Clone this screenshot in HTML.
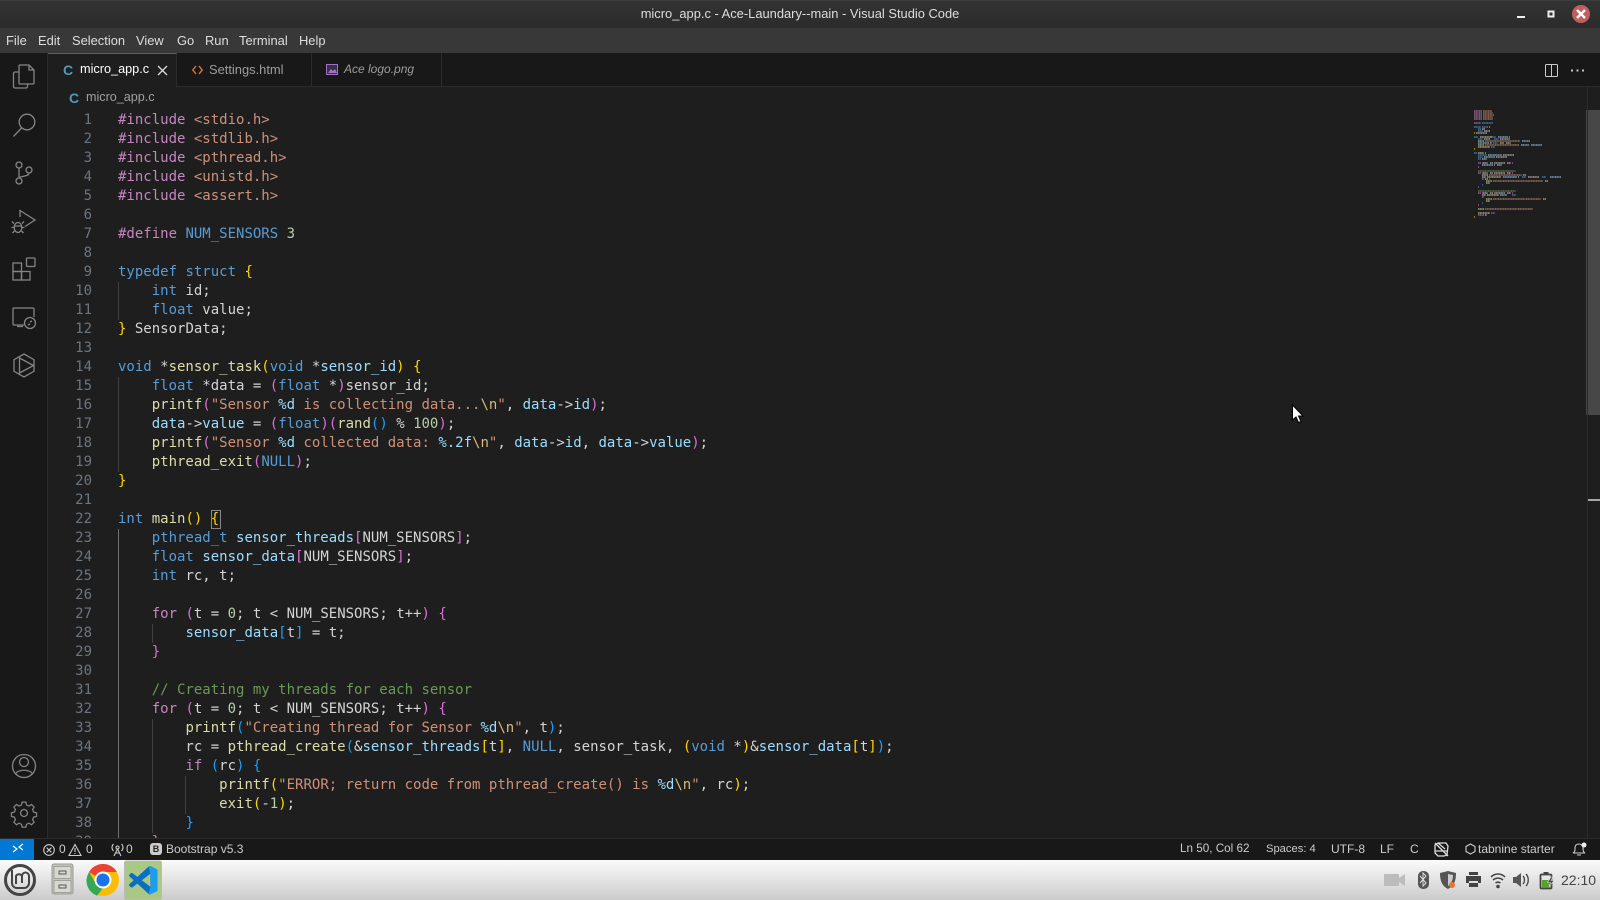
<!DOCTYPE html>
<html><head><meta charset="utf-8"><style>
html,body{margin:0;padding:0;width:1600px;height:900px;overflow:hidden;background:#1e1e1e}
body{position:relative;font-family:"Liberation Sans",sans-serif;color:#ccc}
.a{position:absolute}
.t{position:absolute;white-space:pre}
#code{position:absolute;left:0;top:111px;width:1470px;height:727px;overflow:hidden;font:14px/19px "DejaVu Sans Mono",monospace;color:#d4d4d4}
#code div{position:absolute;left:118px;white-space:pre;height:19px}
#nums{position:absolute;left:50px;top:111px;width:42px;height:727px;overflow:hidden;text-align:right;font:14px/19px "DejaVu Sans Mono",monospace;color:#6b7580}
.k{color:#c586c0}.b{color:#569cd6}.s{color:#ce9178}.f{color:#dcdcaa}.v{color:#9cdcfe}.n{color:#b5cea8}.c{color:#6a9955}.g{color:#ffd700}.o{color:#da70d6}.l{color:#179fff}.e{color:#d7ba7d}
.m{position:absolute;top:33px;font-size:12.9px;line-height:15px;color:#ddd;white-space:pre}
.st{position:absolute;top:842px;font-size:12px;line-height:14px;color:#ccc;white-space:pre}
svg{position:absolute;overflow:visible}
</style></head><body>
<div class="a" style="left:0;top:0;width:1600px;height:28px;background:linear-gradient(#333,#2b2b2b);border-top:1px solid #3c3c3c;box-sizing:border-box"></div>
<div class="t" style="left:0;width:1600px;text-align:center;top:6px;font-size:12.9px;line-height:15px;color:#ddd">micro_app.c - Ace-Laundary--main - Visual Studio Code</div>
<svg style="left:0;top:0" width="1600" height="28">
<rect x="1517" y="16" width="8" height="2" fill="#eee"/>
<rect x="1548.500" y="11.500" width="5" height="5" fill="none" stroke="#eee" stroke-width="2"/>
<circle cx="1581" cy="14" r="9" fill="#c15f5f"/>
<path d="M1577 10l8 8M1585 10l-8 8" stroke="#fff" stroke-width="2.400"/>
</svg>
<div class="a" style="left:0;top:28px;width:1600px;height:25px;background:#383838"></div>
<span class="m" style="left:6px">File</span><span class="m" style="left:38px">Edit</span><span class="m" style="left:72px">Selection</span><span class="m" style="left:136px">View</span><span class="m" style="left:177px">Go</span><span class="m" style="left:205px">Run</span><span class="m" style="left:239px">Terminal</span><span class="m" style="left:299px">Help</span>

<div class="a" style="left:0;top:53px;width:47px;height:785px;background:#181818;border-right:1px solid #2b2b2b"></div>
<div class="a" style="left:48px;top:53px;width:1552px;height:34px;background:#181818;border-bottom:1px solid #2b2b2b;box-sizing:border-box"></div>
<div class="a" style="left:48px;top:53px;width:129px;height:35px;background:#1e1e1e;border-top:1px solid #0078d4;border-right:1px solid #2b2b2b;box-sizing:border-box"></div>
<div class="a" style="left:311px;top:53px;width:1px;height:34px;background:#2b2b2b"></div>
<div class="a" style="left:441px;top:53px;width:1px;height:34px;background:#2b2b2b"></div>
<span class="t" style="left:63px;top:62px;font:bold 14px/16px 'Liberation Sans',sans-serif;color:#519aba">C</span>
<span class="t" style="left:80px;top:62px;font-size:12.700px;line-height:15px;color:#fff">micro_app.c</span>
<svg style="left:157px;top:65px" width="12" height="12"><path d="M1 1l9 9M10 1l-9 9" stroke="#ddd" stroke-width="1.300" fill="none"/></svg>
<svg style="left:192px;top:65px" width="11" height="10" fill="none" stroke="#e37933" stroke-width="1.400"><path d="M4 1L.8 5 4 9M7 1l3.200 4L7 9"/></svg>
<span class="t" style="left:209px;top:62px;font-size:12.900px;line-height:15px;color:#9d9d9d">Settings.html</span>
<svg style="left:326px;top:64px" width="13" height="12"><rect x=".5" y=".5" width="11" height="10" fill="#3a2f4a" stroke="#a074c4"/><path d="M2 9l3-4 2 2 2-2 2 4z" fill="#a074c4"/></svg>
<span class="t" style="left:344px;top:62px;font-size:12px;line-height:15px;color:#9d9d9d;font-style:italic">Ace logo.png</span>
<svg style="left:1545px;top:64px" width="13" height="13"><rect x=".5" y=".5" width="12" height="12" rx="1" fill="none" stroke="#ccc"/><path d="M6.500 0v13" stroke="#ccc"/></svg>
<svg style="left:1571px;top:69px" width="14" height="3"><path d="M0 1.500h2M5.500 1.500h2M11 1.500h2" stroke="#c5c5c5" stroke-width="2"/></svg>

<span class="t" style="left:69px;top:90px;font:bold 14px/16px 'Liberation Sans',sans-serif;color:#519aba">C</span>
<span class="t" style="left:86px;top:90px;font-size:12.600px;line-height:15px;color:#a0a0a0">micro_app.c</span>

<svg style="left:0;top:53px" width="47" height="785" fill="none" stroke="#858585" stroke-width="1.300">
<g transform="translate(0,-53)">
<path d="M20 65h9l5 5v13a1 1 0 0 1-1 1H20a1 1 0 0 1-1-1V66a1 1 0 0 1 1-1zM29 65v5h5M19 72h-4a1.500 1.500 0 0 0-1.500 1.500v13a1.500 1.500 0 0 0 1.500 1.500h11a1.500 1.500 0 0 0 1.500-1.500V84"/>
<circle cx="27" cy="122" r="7.800"/><path d="M21.500 128L13.500 136.500"/>
<circle cx="19" cy="165" r="3"/><circle cx="19" cy="181" r="3"/><circle cx="29" cy="170" r="3"/><path d="M19 168v10M29 173c0 4-10 3-10 5"/>
<path d="M20 217v-6.500l15 9.500-10 6.500"/><ellipse cx="18" cy="227.500" rx="3.800" ry="5"/><path d="M14 223.500l-2-2M22 223.500l2-2M14 227.500h-2.500M22 227.500h2.500M14.500 231l-2 2M21.500 231l2 2M14 226h8"/>
<rect x="13" y="263" width="8.500" height="8.500"/><rect x="13" y="271.500" width="8.500" height="8.500"/><rect x="21.500" y="271.500" width="8.500" height="8.500"/><rect x="26.500" y="258" width="8.500" height="8.500" rx="1"/>
<path d="M24 325H14a1 1 0 0 1-1-1V309a1 1 0 0 1 1-1h19a1 1 0 0 1 1 1v8M17 326.500h6"/><circle cx="30" cy="323" r="5.500"/><path d="M28 325l2-1M30 322l2-1"/>
<path d="M24 354l10 5.700v11.600l-10 5.700-10-5.700V359.700z"/><path d="M19.500 358v15l14-7.500z"/>
<circle cx="24" cy="766" r="11.500"/><circle cx="24" cy="762" r="4.500"/><path d="M15.500 774c2-5 15-5 17 0"/>
<circle cx="24" cy="813" r="3.500"/><path d="M22 802h4l.6 3 2.700 1.200 2.600-1.700 2.800 2.800-1.700 2.600 1.200 2.700 3 .6v4l-3 .6-1.200 2.700 1.700 2.600-2.800 2.800-2.600-1.700-2.700 1.200-.6 3h-4l-.6-3-2.700-1.200-2.600 1.700-2.800-2.800 1.700-2.600-1.200-2.700-3-.6v-4l3-.6 1.200-2.700-1.700-2.600 2.800-2.800 2.600 1.700 2.700-1.200z" transform="translate(24 813) scale(.95) translate(-24 -813.500)"/>
</g></svg>

<div id="nums">
<div>1</div><div>2</div><div>3</div><div>4</div><div>5</div><div>6</div><div>7</div><div>8</div><div>9</div><div>10</div><div>11</div><div>12</div><div>13</div><div>14</div><div>15</div><div>16</div><div>17</div><div>18</div><div>19</div><div>20</div><div>21</div><div>22</div><div>23</div><div>24</div><div>25</div><div>26</div><div>27</div><div>28</div><div>29</div><div>30</div><div>31</div><div>32</div><div>33</div><div>34</div><div>35</div><div>36</div><div>37</div><div>38</div><div>39</div>
</div>

<div id="code">
<i class="a" style="left:118px;top:171px;width:1px;height:38px;background:#404040"></i>
<i class="a" style="left:118px;top:266px;width:1px;height:95px;background:#404040"></i>
<i class="a" style="left:118px;top:418px;width:1px;height:310px;background:#707070"></i>
<i class="a" style="left:152px;top:513px;width:1px;height:19px;background:#404040"></i>
<i class="a" style="left:152px;top:608px;width:1px;height:114px;background:#404040"></i>
<i class="a" style="left:185px;top:665px;width:1px;height:38px;background:#404040"></i>
<i class="a" style="left:211px;top:399px;width:8px;height:17px;border:1px solid #888;box-sizing:content-box"></i>
<div style="top:0"><span class="k">#include</span> <span class="s">&lt;stdio.h&gt;</span></div>
<div style="top:19px"><span class="k">#include</span> <span class="s">&lt;stdlib.h&gt;</span></div>
<div style="top:38px"><span class="k">#include</span> <span class="s">&lt;pthread.h&gt;</span></div>
<div style="top:57px"><span class="k">#include</span> <span class="s">&lt;unistd.h&gt;</span></div>
<div style="top:76px"><span class="k">#include</span> <span class="s">&lt;assert.h&gt;</span></div>
<div style="top:114px"><span class="k">#define</span> <span class="b">NUM_SENSORS</span> <span class="n">3</span></div>
<div style="top:152px"><span class="b">typedef</span> <span class="b">struct</span> <span class="g">{</span></div>
<div style="top:171px">    <span class="b">int</span> id;</div>
<div style="top:190px">    <span class="b">float</span> value;</div>
<div style="top:209px"><span class="g">}</span> SensorData;</div>
<div style="top:247px"><span class="b">void</span> *<span class="f">sensor_task</span><span class="g">(</span><span class="b">void</span> *<span class="v">sensor_id</span><span class="g">)</span> <span class="g">{</span></div>
<div style="top:266px">    <span class="b">float</span> *data = <span class="o">(</span><span class="b">float</span> *<span class="o">)</span>sensor_id;</div>
<div style="top:285px">    <span class="f">printf</span><span class="o">(</span><span class="s">"Sensor </span><span class="v">%d</span><span class="s"> is collecting data...</span><span class="e">\n</span><span class="s">"</span>, <span class="v">data</span>-&gt;<span class="v">id</span><span class="o">)</span>;</div>
<div style="top:304px">    <span class="v">data</span>-&gt;<span class="v">value</span> = <span class="o">(</span><span class="b">float</span><span class="o">)(</span><span class="f">rand</span><span class="l">()</span> % <span class="n">100</span><span class="o">)</span>;</div>
<div style="top:323px">    <span class="f">printf</span><span class="o">(</span><span class="s">"Sensor </span><span class="v">%d</span><span class="s"> collected data: </span><span class="v">%.2f</span><span class="e">\n</span><span class="s">"</span>, <span class="v">data</span>-&gt;<span class="v">id</span>, <span class="v">data</span>-&gt;<span class="v">value</span><span class="o">)</span>;</div>
<div style="top:342px">    <span class="f">pthread_exit</span><span class="o">(</span><span class="b">NULL</span><span class="o">)</span>;</div>
<div style="top:361px"><span class="g">}</span></div>
<div style="top:399px"><span class="b">int</span> <span class="f">main</span><span class="g">()</span> <span class="g">{</span></div>
<div style="top:418px">    <span class="b">pthread_t</span> <span class="v">sensor_threads</span><span class="o">[</span>NUM_SENSORS<span class="o">]</span>;</div>
<div style="top:437px">    <span class="b">float</span> <span class="v">sensor_data</span><span class="o">[</span>NUM_SENSORS<span class="o">]</span>;</div>
<div style="top:456px">    <span class="b">int</span> rc, t;</div>
<div style="top:494px">    <span class="k">for</span> <span class="o">(</span>t = <span class="n">0</span>; t &lt; NUM_SENSORS; t++<span class="o">)</span> <span class="o">{</span></div>
<div style="top:513px">        <span class="v">sensor_data</span><span class="l">[</span>t<span class="l">]</span> = t;</div>
<div style="top:532px">    <span class="o">}</span></div>
<div style="top:570px">    <span class="c">// Creating my threads for each sensor</span></div>
<div style="top:589px">    <span class="k">for</span> <span class="o">(</span>t = <span class="n">0</span>; t &lt; NUM_SENSORS; t++<span class="o">)</span> <span class="o">{</span></div>
<div style="top:608px">        <span class="f">printf</span><span class="l">(</span><span class="s">"Creating thread for Sensor </span><span class="v">%d</span><span class="e">\n</span><span class="s">"</span>, t<span class="l">)</span>;</div>
<div style="top:627px">        rc = <span class="f">pthread_create</span><span class="l">(</span>&amp;<span class="v">sensor_threads</span><span class="g">[</span>t<span class="g">]</span>, <span class="b">NULL</span>, sensor_task, <span class="g">(</span><span class="b">void</span> *<span class="g">)</span>&amp;<span class="v">sensor_data</span><span class="g">[</span>t<span class="g">]</span><span class="l">)</span>;</div>
<div style="top:646px">        <span class="k">if</span> <span class="l">(</span>rc<span class="l">)</span> <span class="l">{</span></div>
<div style="top:665px">            <span class="f">printf</span><span class="g">(</span><span class="s">"ERROR; return code from pthread_create() is </span><span class="v">%d</span><span class="e">\n</span><span class="s">"</span>, rc<span class="g">)</span>;</div>
<div style="top:684px">            <span class="f">exit</span><span class="g">(</span>-<span class="n">1</span><span class="g">)</span>;</div>
<div style="top:703px">        <span class="l">}</span></div>
<div style="top:722px">    <span class="o">}</span></div>
</div>

<svg style="left:0;top:0" width="1600" height="900" fill="none" stroke-width="1.400" stroke-dasharray="1.300 .35" opacity=".68">
<path stroke="#c586c0" d="M1474 111h8M1474 113h8M1474 115h8M1474 117h8M1474 119h8M1474 123h7M1478 163h3M1478 173h3M1482 179h2M1478 193h3M1482 197h2M1478 215h6"/>
<path stroke="#ce9178" d="M1483 111h9M1483 113h10M1483 115h11M1483 117h10M1483 119h10M1485 141h35M1485 145h34M1489 175h33M1493 181h50M1493 199h48M1485 209h48"/>
<path stroke="#569cd6" d="M1482 123h11M1474 127h7M1482 127h6M1478 129h3M1478 131h5M1474 137h4M1492 137h4M1478 139h5M1494 139h5M1493 143h5M1491 147h4M1474 153h3M1478 155h9M1478 157h5M1478 159h3M1522 177h4M1542 177h4M1512 195h4M1491 213h4"/>
<path stroke="#dcdcaa" d="M1480 137h11M1478 141h6M1500 143h4M1478 145h6M1478 147h12M1478 153h4M1482 175h6M1487 177h14M1486 181h6M1486 183h4M1487 195h12M1486 199h6M1486 201h4M1478 209h6M1478 213h12"/>
<path stroke="#9cdcfe" d="M1498 137h9M1522 141h8M1478 143h11M1521 145h8M1531 145h11M1488 155h14M1484 157h11M1482 165h11M1503 177h14M1550 177h11M1500 195h7"/>
<path stroke="#d4d4d4" d="M1482 129h3M1484 131h6M1476 133h11M1484 139h6M1500 139h10M1490 143h2M1506 143h5M1503 155h11M1496 157h11M1482 159h5M1483 163h5M1490 163h3M1494 163h11M1507 163h3M1494 165h1M1497 165h5M1483 173h5M1490 173h3M1494 173h11M1507 173h3M1523 175h3M1482 177h4M1518 177h1M1528 177h11M1485 179h3M1545 181h3M1483 193h5M1490 193h3M1494 193h11M1507 193h3M1482 195h4M1543 199h3M1485 215h2"/>
<path stroke="#6a9955" d="M1478 171h38M1478 191h38"/>
<path stroke="#ffd700" d="M1489 127h1M1474 133h1M1491 137h1M1507 137h1M1509 137h1M1474 149h1M1482 153h2M1485 153h1M1474 217h1"/>
<path stroke="#da70d6" d="M1482 163h1M1510 163h1M1512 163h1M1478 167h1M1482 173h1M1510 173h1M1512 173h1M1478 187h1M1482 193h1M1510 193h1M1512 193h1M1478 205h1"/>
<path stroke="#179fff" d="M1482 185h1M1482 203h1M1489 179h1"/>
</svg>

<div class="a" style="left:1586px;top:110px;width:14px;height:305px;background:#474747"></div>
<div class="a" style="left:1588px;top:499px;width:12px;height:2px;background:#a8a8a8"></div>
<div class="a" style="left:1587px;top:87px;width:1px;height:751px;background:#2a2a2a"></div>

<svg style="left:1291px;top:404px" width="14" height="20"><path d="M1.500 1v15l3.500-3 2.500 5.500 2.500-1-2.500-5.500h4.500z" fill="#fff" stroke="#000"/></svg>

<div class="a" style="left:0;top:838px;width:1600px;height:22px;background:#181818;border-top:1px solid #2b2b2b;box-sizing:border-box"></div>
<div class="a" style="left:0;top:839px;width:34px;height:21px;background:#0078d4"></div>
<svg style="left:12px;top:843px" width="12" height="12" fill="none" stroke="#fff" stroke-width="1.200"><path d="M1 3l4 3-4 3M11 1L7 4l4 3"/></svg>
<svg style="left:43px;top:843px" width="90" height="14" fill="none" stroke="#ccc" stroke-width="1.100"><circle cx="6" cy="7" r="5.300"/><path d="M3.700 4.700l4.600 4.600M8.300 4.700L3.700 9.300"/><path d="M32 1.500l6 11H26zM32 5v4M32 10v1"/></svg>
<span class="st" style="left:59px">0</span><span class="st" style="left:86px">0</span>
<svg style="left:111px;top:843px" width="13" height="14" fill="none" stroke="#ccc" stroke-width="1.100"><circle cx="6.500" cy="4.500" r="1.500"/><path d="M6.500 6L3 13M6.500 6L10 13M4.500 10h4M2.500 1C.5 3 .5 6 2.500 8M10.500 1c2 2 2 5 0 7"/></svg>
<span class="st" style="left:126px">0</span>
<div class="a" style="left:150px;top:843px;width:12px;height:12px;background:#ccc;border-radius:3px;color:#222;font:bold 9px/12px 'Liberation Sans',sans-serif;text-align:center">B</div>
<span class="st" style="left:166px">Bootstrap v5.3</span>
<span class="st" style="left:1180px;font-size:11.700px">Ln 50, Col 62</span><span class="st" style="left:1266px;font-size:11.200px">Spaces: 4</span><span class="st" style="left:1331px">UTF-8</span><span class="st" style="left:1380px">LF</span><span class="st" style="left:1410px">C</span>
<svg style="left:1434px;top:842px" width="15" height="15" fill="none" stroke="#ddd" stroke-width="1.300"><path d="M1 3l3-2h8l2 3-1 9-3 1H4l-3-3zM1 1l13 13M1 9h12M4 1l7 6"/></svg>
<svg style="left:1465px;top:843px" width="11" height="12" fill="none" stroke="#ccc" stroke-width="1.100"><path d="M5.500 1l4.500 2.500v5L5.500 11 1 8.500v-5z"/></svg>
<span class="st" style="left:1478px">tabnine starter</span>
<svg style="left:1572px;top:842px" width="16" height="15" fill="none" stroke="#ccc" stroke-width="1.100"><path d="M1 11c2-1 2-2 2-5 0-3 2-4 4-4s3 1 4 3c0 3 0 5 2 6zM5 13h4"/><circle cx="12" cy="3" r="2.500" fill="#eee" stroke="none"/></svg>

<div class="a" style="left:0;top:860px;width:1600px;height:40px;background:linear-gradient(#fbfbfb,#cbcbcb)"></div>
<svg style="left:0;top:860px" width="1600" height="40">
<circle cx="20" cy="20" r="14.500" fill="none" stroke="#444" stroke-width="3"/>
<path d="M12 10v13a5 5 0 0 0 5 5h7a5 5 0 0 0 5-5v-7a3.500 3.500 0 0 0-7 0v7M22 16a3.500 3.500 0 0 0-6 0v8" fill="none" stroke="#444" stroke-width="2"/>
<rect x="52" y="4" width="21" height="30" rx="2" fill="#c4c4bc" stroke="#9a9a94"/><rect x="54" y="6.500" width="17" height="12" fill="#d8d8d2" stroke="#8d8d88" stroke-width=".7"/><rect x="54" y="20.500" width="17" height="12" fill="#d8d8d2" stroke="#8d8d88" stroke-width=".7"/><rect x="59" y="11" width="7" height="3" fill="none" stroke="#555"/><rect x="59" y="25" width="7" height="3" fill="none" stroke="#555"/>
<circle cx="103" cy="20" r="16" fill="#fbbc04"/>
<path d="M103 4a16 16 0 0 1 13.900 8H103a8 8 0 0 0-7 4.100L89.100 12A16 16 0 0 1 103 4z" fill="#ea4335"/>
<path d="M89.100 12L96 24a8 8 0 0 0 7 4l-6 7.800A16 16 0 0 1 89.100 12z" fill="#34a853"/>
<circle cx="103" cy="20" r="8.500" fill="#fff"/><circle cx="103" cy="20" r="6.500" fill="#1a73e8"/>
<rect x="124.500" y="1" width="37" height="39" rx="2" fill="#a9c886" stroke="#bbb"/>
<g transform="translate(129,6) scale(.285)">
<path fill-rule="evenodd" fill="#0a6fc2" d="M70.900 99.300a6.200 6.200 0 0 0 5-.2L96.400 89.200a6.200 6.200 0 0 0 3.500-5.600V16.400a6.200 6.200 0 0 0-3.500-5.600L75.800.9a6.200 6.200 0 0 0-7.100 1.200L29.400 38 12.200 25a4.200 4.200 0 0 0-5.300.2L1.400 30.300a4.200 4.200 0 0 0 0 6.200L16.300 50 1.400 63.500a4.200 4.200 0 0 0 0 6.200l5.500 5a4.200 4.200 0 0 0 5.300.2L29.400 62l39.300 35.900a6.200 6.200 0 0 0 2.200 1.400zM75 27.300 45.100 50 75 72.700z"/>
<path fill="#1f9cf0" d="M75.800.9 96.400 10.800a6.200 6.200 0 0 1 3.500 5.600V83.600a6.200 6.200 0 0 1-3.500 5.600L75.800 99.100a6.200 6.200 0 0 1-7.100-1.200L75 72.700V27.300L68.700 2.100a6.200 6.200 0 0 1 7.100-1.200z"/>
</g>
<path d="M1385 14h13a1 1 0 0 1 1 1v3l6-4v12l-6-4v3a1 1 0 0 1-1 1h-13a1 1 0 0 1-1-1V15a1 1 0 0 1 1-1z" fill="#bcbcbc"/>
<rect x="1418" y="11" width="11" height="18" rx="5" fill="#555"/><path d="M1420 16l6 7-3 3V13l3 3-6 7" fill="none" stroke="#ddd"/>
<path d="M1440 13l8-2 8 2c0 8-2 13-8 16-6-3-8-8-8-16z" fill="#555"/><path d="M1448 14l5 1c0 5-2 9-5 11z" fill="#ccc"/><circle cx="1452" cy="25" r="3" fill="#f07030"/>
<path d="M1469 12h9v3h-9zM1466 16h15v7h-3v-2h-9v2h-3zM1469 23h9v4h-9z" fill="#444"/>
<path d="M1491 17c4-4 10-4 14 0M1493 20c3-2.500 7-2.500 10 0M1495.500 23c1.500-1 3.500-1 5 0" fill="none" stroke="#444" stroke-width="1.600"/><circle cx="1498" cy="26.500" r="1.800" fill="#444"/>
<path d="M1513 17h3l5-4v14l-5-4h-3z" fill="#555"/><path d="M1523 16c2 2 2 6 0 8M1526 14c3 3 3 9 0 12" fill="none" stroke="#444" stroke-width="1.300"/>
<rect x="1540.500" y="14.500" width="11" height="14" rx="1" fill="none" stroke="#444" stroke-width="1.800"/><rect x="1543.500" y="12" width="5" height="2" fill="#444"/><rect x="1542" y="20" width="8" height="7.500" fill="#5aa02c"/><path d="M1551 17l-3.500 5.500h3l-1.500 4.500 5-6.500h-3l2-3.500z" fill="#444" stroke="#e4e4e4" stroke-width=".6"/>
</svg>
<span class="t" style="left:1561px;top:872px;font-size:14px;line-height:16px;color:#444">22:10</span>
</body></html>
